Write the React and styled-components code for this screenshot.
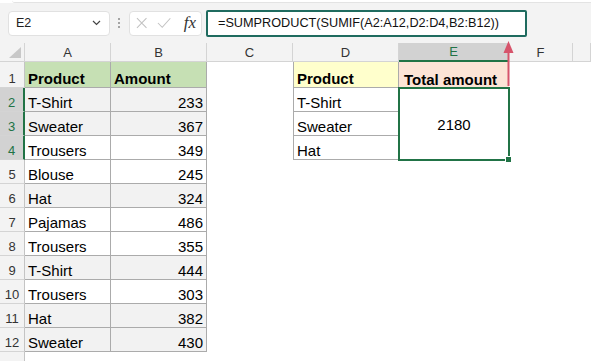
import React from 'react';
import styled, { createGlobalStyle } from 'styled-components';

const GlobalStyle = createGlobalStyle`
    html, body {
        margin: 0;
        padding: 0;
        background: #ffffff;
    }
    body {
        font-family: "Liberation Sans", Arial, sans-serif;
        overflow: hidden;
    }
`;

const GREEN = '#217346';
const GRID = '#ababab';
const HEAD_LINE = '#d4d4d4';

const Frame = styled.div`
    position: relative;
    width: 591px;
    height: 361px;
    overflow: hidden;
    background: #ffffff;
`;

// thin edge of the ribbon above the formula bar
const RibbonEdge = styled.div`
    height: 3px;
    margin-left: 12px;
    background: #ffffff;
    border-bottom: 1px solid #e3e3e3;
    border-bottom-left-radius: 4px;
    box-sizing: border-box;
`;

const Toolbar = styled.div`
    display: flex;
    align-items: center;
    height: 40px;
    padding-left: 8px;
    background: #f3f3f3;
`;

const NameBox = styled.div`
    display: flex;
    align-items: center;
    justify-content: space-between;
    box-sizing: border-box;
    width: 102px;
    height: 25px;
    padding: 0 8px 0 7px;
    background: #ffffff;
    border: 1px solid #e1e1e1;
    border-radius: 4px;
    font-size: 12.5px;
    color: #222;
`;

const Dots = styled.svg`
    margin: 0 8px 0 7px;
    flex: none;
`;

const FuncBox = styled.div`
    display: flex;
    align-items: center;
    box-sizing: border-box;
    width: 73px;
    height: 25px;
    padding: 0 5px 0 6px;
    margin-right: 4px;
    gap: 10px;
    background: #ffffff;
    border: 1px solid #e1e1e1;
    border-radius: 4px;
`;

const Fx = styled.span`
    font-family: "Liberation Serif", "Times New Roman", serif;
    font-style: italic;
    font-size: 17px;
    color: #333;
    margin-left: 2px;
`;

const FormulaBox = styled.div`
    display: flex;
    align-items: center;
    box-sizing: border-box;
    width: 321px;
    height: 27px;
    padding-left: 10px;
    background: #ffffff;
    border: 2.5px solid #1f6b5f;
    border-radius: 2px;
    font-size: 12.7px;
    color: #111;
    white-space: nowrap;
`;

const Sheet = styled.div`
    display: grid;
    grid-template-columns: 25px 86px 96px 86px 106px 110px 64px 1fr;
    grid-template-rows: 19px 26px repeat(12, 24px);
    background: #ffffff;
`;

const Corner = styled.div`
    display: flex;
    align-items: flex-end;
    justify-content: flex-end;
    padding: 0 3px 3px 0;
    background: #f3f3f3;
    border-right: 1px solid ${HEAD_LINE};
    border-bottom: 1px solid ${HEAD_LINE};
`;

const ColHead = styled.div`
    display: flex;
    align-items: center;
    justify-content: center;
    box-sizing: border-box;
    font-size: 13px;
    color: ${p => (p.$selected ? GREEN : '#333')};
    background: ${p => (p.$selected ? '#d2d2d2' : '#f3f3f3')};
    border-right: 1px solid ${HEAD_LINE};
    border-bottom: ${p => (p.$selected ? `2px solid ${GREEN}` : `1px solid ${HEAD_LINE}`)};
`;

const RowHead = styled.div`
    display: flex;
    align-items: flex-end;
    justify-content: center;
    box-sizing: border-box;
    line-height: 17px;
    font-size: 13px;
    color: ${p => (p.$selected ? GREEN : '#333')};
    background: ${p => (p.$selected ? '#d2d2d2' : '#f3f3f3')};
    border-bottom: 1px solid ${HEAD_LINE};
    border-right: ${p => (p.$selected ? `2px solid ${GREEN}` : `1px solid #c4c4c4`)};
`;

const Cell = styled.div`
    display: flex;
    align-items: flex-end;
    justify-content: ${p => (p.$right ? 'flex-end' : 'flex-start')};
    box-sizing: border-box;
    padding: 0 3px;
    line-height: 17px;
    font-size: 15px;
    font-weight: ${p => (p.$bold ? 700 : 400)};
    color: #000;
    white-space: nowrap;
    overflow: hidden;
    background: ${p => p.$bg || 'transparent'};
    border-right: ${p => (p.$boxed ? `1px solid ${GRID}` : 'none')};
    border-bottom: ${p => (p.$boxed ? `1px solid ${GRID}` : 'none')};
    border-left: ${p => (p.$leftEdge ? `1px solid ${GRID}` : 'none')};
`;

const MergedCell = styled.div`
    position: relative;
    z-index: 1;
    grid-row: span 3;
    margin: -1px -1px -1px -1px;
    display: flex;
    align-items: center;
    justify-content: center;
    border: 2px solid ${GREEN};
    font-size: 15px;
    color: #000;
    background: #ffffff;
`;

const Handle = styled.span`
    position: absolute;
    right: -4px;
    bottom: -4px;
    width: 5px;
    height: 5px;
    background: ${GREEN};
    border: 1px solid #ffffff;
`;

const Arrow = styled.svg`
    position: absolute;
    left: 502px;
    top: 40px;
    z-index: 2;
`;

const products = [
    ['T-Shirt', 233],
    ['Sweater', 367],
    ['Trousers', 349],
    ['Blouse', 245],
    ['Hat', 324],
    ['Pajamas', 486],
    ['Trousers', 355],
    ['T-Shirt', 444],
    ['Trousers', 303],
    ['Hat', 382],
    ['Sweater', 430],
];

const lookup = ['T-Shirt', 'Sweater', 'Hat'];
const columns = ['A', 'B', 'C', 'D', 'E', 'F', ''];

function SheetRow({ r }) {
    const selected = r >= 2 && r <= 4;
    const item = products[r - 2];
    const shade = item && lookup.includes(item[0]) ? '#f2f2f2' : '#ffffff';

    let a = <Cell />;
    let b = <Cell />;
    if (r === 1) {
        a = <Cell $boxed $bold $bg="#c6e0b4">Product</Cell>;
        b = <Cell $boxed $bold $bg="#c6e0b4">Amount</Cell>;
    } else if (item) {
        a = <Cell $boxed $bg={shade}>{item[0]}</Cell>;
        b = <Cell $boxed $right $bg={shade}>{item[1]}</Cell>;
    }

    let d = <Cell />;
    if (r === 1) d = <Cell $boxed $leftEdge $bold $bg="#ffffcc">Product</Cell>;
    else if (selected) d = <Cell $boxed $leftEdge>{lookup[r - 2]}</Cell>;

    let e = <Cell />;
    if (r === 1) e = <Cell $bold $bg="#fce4d6" style={{ paddingLeft: 5 }}>Total amount</Cell>;
    else if (r === 2) e = <MergedCell>2180<Handle /></MergedCell>;
    else if (selected) e = null;

    return (
        <>
            <RowHead $selected={selected}>{r}</RowHead>
            {a}
            {b}
            <Cell />
            {d}
            {e}
            <Cell />
            <Cell />
        </>
    );
}

export default function App() {
    const rowNumbers = Array.from({ length: 13 }, (_, i) => i + 1);

    return (
        <Frame>
            <GlobalStyle />
            <RibbonEdge />
            <Toolbar>
                <NameBox>
                    E2
                    <svg width="9" height="6" viewBox="0 0 9 6">
                        <polyline points="1,1 4.5,4.5 8,1" fill="none" stroke="#444" strokeWidth="1.2" />
                    </svg>
                </NameBox>
                <Dots width="4" height="12" viewBox="0 0 4 12">
                    <circle cx="2" cy="2" r="1" fill="#8a8a8a" />
                    <circle cx="2" cy="6" r="1" fill="#8a8a8a" />
                    <circle cx="2" cy="10" r="1" fill="#8a8a8a" />
                </Dots>
                <FuncBox>
                    <svg width="12" height="12" viewBox="0 0 12 12">
                        <path d="M1 1 L11 11 M11 1 L1 11" stroke="#c2c2c2" strokeWidth="1.1" />
                    </svg>
                    <svg width="15" height="12" viewBox="0 0 15 12">
                        <polyline points="1,6 5.5,10.5 14,1" fill="none" stroke="#c2c2c2" strokeWidth="1.1" />
                    </svg>
                    <Fx>fx</Fx>
                </FuncBox>
                <FormulaBox>=SUMPRODUCT(SUMIF(A2:A12,D2:D4,B2:B12))</FormulaBox>
            </Toolbar>

            <Sheet>
                <Corner>
                    <svg width="12" height="11" viewBox="0 0 12 11">
                        <polygon points="12,0 12,11 0,11" fill="#c8c8c8" />
                    </svg>
                </Corner>
                {columns.map((c, i) => (
                    <ColHead key={i} $selected={c === 'E'}>{c}</ColHead>
                ))}
                {rowNumbers.map(r => (
                    <SheetRow key={r} r={r} />
                ))}
            </Sheet>

            <Arrow width="13" height="47" viewBox="0 0 13 47">
                <line x1="6.5" y1="10" x2="6.5" y2="46" stroke="#d6546b" strokeWidth="2" />
                <polygon points="6.5,1 1.5,13 11.5,13" fill="#d6546b" />
            </Arrow>
        </Frame>
    );
}
